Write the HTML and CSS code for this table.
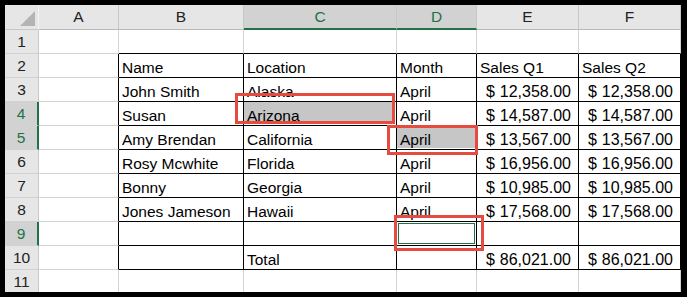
FILE: index.html
```html
<!DOCTYPE html>
<html>
<head>
<meta charset="utf-8">
<link rel="stylesheet" href="styles.css">
</head>
<body>
<div class="sheet">
  <div class="corner"><svg width="33" height="24" viewBox="0 0 33 24"><polygon points="30,6 30,21 15,21" fill="#b4b4b4"/></svg></div>
  <div class="ch">A</div><div class="ch">B</div><div class="ch sel">C</div><div class="ch sel">D</div><div class="ch">E</div><div class="ch">F</div>

  <div class="rh">1</div><div class="c"></div><div class="c tt"></div><div class="c tt"></div><div class="c tt"></div><div class="c tt"></div><div class="c tt"></div>

  <div class="rh">2</div><div class="c tl"></div><div class="c t">Name</div><div class="c t">Location</div><div class="c t">Month</div><div class="c t">Sales Q1</div><div class="c t">Sales Q2</div>

  <div class="rh">3</div><div class="c tl"></div><div class="c t">John Smith</div><div class="c t">Alaska</div><div class="c t">April</div><div class="c t m"><span>$</span><span>12,358.00</span></div><div class="c t m"><span>$</span><span>12,358.00</span></div>

  <div class="rh sel">4</div><div class="c tl"></div><div class="c t">Susan</div><div class="c t fill">Arizona</div><div class="c t">April</div><div class="c t m"><span>$</span><span>14,587.00</span></div><div class="c t m"><span>$</span><span>14,587.00</span></div>

  <div class="rh sel">5</div><div class="c tl"></div><div class="c t">Amy Brendan</div><div class="c t">California</div><div class="c t fill">April</div><div class="c t m"><span>$</span><span>13,567.00</span></div><div class="c t m"><span>$</span><span>13,567.00</span></div>

  <div class="rh">6</div><div class="c tl"></div><div class="c t">Rosy Mcwhite</div><div class="c t">Florida</div><div class="c t">April</div><div class="c t m"><span>$</span><span>16,956.00</span></div><div class="c t m"><span>$</span><span>16,956.00</span></div>

  <div class="rh">7</div><div class="c tl"></div><div class="c t">Bonny</div><div class="c t">Georgia</div><div class="c t">April</div><div class="c t m"><span>$</span><span>10,985.00</span></div><div class="c t m"><span>$</span><span>10,985.00</span></div>

  <div class="rh">8</div><div class="c tl"></div><div class="c t">Jones Jameson</div><div class="c t">Hawaii</div><div class="c t">April</div><div class="c t m"><span>$</span><span>17,568.00</span></div><div class="c t m"><span>$</span><span>17,568.00</span></div>

  <div class="rh sel">9</div><div class="c tl"></div><div class="c t"></div><div class="c t"></div><div class="c t active"></div><div class="c t"></div><div class="c t"></div>

  <div class="rh">10</div><div class="c tl"></div><div class="c t"></div><div class="c t">Total</div><div class="c t"></div><div class="c t m"><span>$</span><span>86,021.00</span></div><div class="c t m"><span>$</span><span>86,021.00</span></div>

  <div class="rh">11</div><div class="c"></div><div class="c"></div><div class="c"></div><div class="c"></div><div class="c"></div><div class="c"></div>

  <div class="mark mark1"></div>
  <div class="mark mark2"></div>
  <div class="mark mark3"></div>
</div>
</body>
</html>
```

FILE: styles.css
```css
html, body {
  margin: 0;
}
body {
  background: #000;
  padding: 5px 6px 5px 5px;
  height: 297px;
  box-sizing: border-box;
  font-family: "Liberation Sans", Arial, sans-serif;
  font-size: 15.5px;
  color: #000;
}
.sheet {
  position: relative;
  height: 287px;
  overflow: hidden;
  background: #fff;
  display: grid;
  grid-template-columns: 34px 80px 125px 153px 80px 102px 102px;
  grid-template-rows: 25px repeat(11, 24px);
}
.corner {
  background: #e6e6e6;
  border-right: 1px solid #f4f4f4;
  border-bottom: 1px solid #c8c8c8;
  box-sizing: border-box;
}
.corner svg {
  display: block;
}
.ch {
  background: #e6e6e6;
  border-right: 1px solid #c8c8c8;
  border-bottom: 1px solid #b8b8b8;
  box-sizing: border-box;
  display: flex;
  align-items: center;
  justify-content: center;
  color: #222;
  line-height: 18px;
}
.ch.sel {
  background: #d2d2d2;
  color: #217346;
  border-bottom: 2px solid #217346;
}
.rh {
  background: #e6e6e6;
  border-right: 1px solid #c8c8c8;
  border-bottom: 1px solid #d2d2d2;
  box-sizing: border-box;
  display: flex;
  align-items: center;
  justify-content: center;
  color: #222;
  line-height: 18px;
}
.rh.sel {
  background: #d2d2d2;
  color: #217346;
  border-right: 2px solid #217346;
}
.c {
  border-right: 1px solid #d4d4d4;
  border-bottom: 1px solid #d4d4d4;
  box-sizing: border-box;
  padding: 0 3px;
  display: flex;
  align-items: flex-end;
  line-height: 18px;
  white-space: nowrap;
  overflow: hidden;
}
.c.t {
  border-right-color: #000;
  border-bottom-color: #000;
}
.c.tl {
  border-right-color: #000;
}
.c.tt {
  border-bottom-color: #000;
}
.c.m {
  justify-content: space-between;
  padding: 0 7px 0 9px;
  font-size: 16px;
}
.c.fill {
  background: #c6c6c6;
  box-shadow: inset -1px -1px 0 #fff;
}
.c.active {
  box-shadow: inset 0 0 0 1px #fff, inset 0 0 0 2px #217346;
}
.mark {
  position: absolute;
  border: 3px solid #e64b3f;
  box-sizing: border-box;
}
.mark1 {
  left: 230px;
  top: 88px;
  width: 160px;
  height: 31px;
}
.mark2 {
  left: 382px;
  top: 120px;
  width: 91px;
  height: 30px;
}
.mark3 {
  left: 389px;
  top: 210px;
  width: 90px;
  height: 36px;
}
```
